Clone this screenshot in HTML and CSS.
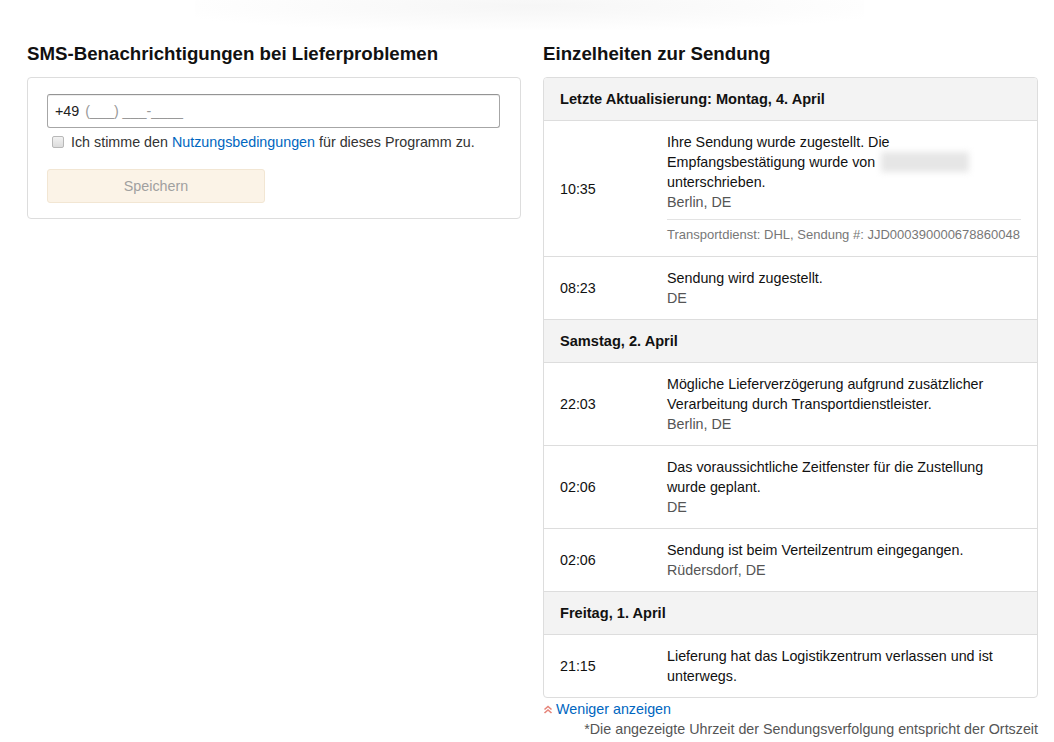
FILE: index.html
```html
<!DOCTYPE html>
<html lang="de">
<head>
<meta charset="utf-8">
<title>Sendungsverfolgung</title>
<link rel="stylesheet" href="styles.css">
</head>
<body>
<div class="topband"></div>
<div class="page">
  <section class="col col-left">
    <h3 class="title">SMS-Benachrichtigungen bei Lieferproblemen</h3>
    <div class="card sms-card">
      <div class="phone-input"><span class="prefix">+49</span><span class="mask">(___) ___-____</span></div>
      <label class="agree"><span class="checkbox"></span><span>Ich stimme den <a class="link" href="#">Nutzungsbedingungen</a> für dieses Programm zu.</span></label>
      <button class="save" disabled>Speichern</button>
    </div>
  </section>
  <section class="col col-right">
    <h3 class="title">Einzelheiten zur Sendung</h3>
    <div class="card events">
      <div class="day">Letzte Aktualisierung: Montag, 4. April</div>
      <div class="event">
        <div class="time">10:35</div>
        <div class="desc">
          <div>Ihre Sendung wurde zugestellt. Die Empfangsbestätigung wurde von <span class="blur"></span> unterschrieben.</div>
          <div class="loc">Berlin, DE</div>
          <div class="carrier">Transportdienst: DHL, Sendung #: JJD000390000678860048</div>
        </div>
      </div>
      <div class="event">
        <div class="time">08:23</div>
        <div class="desc"><div>Sendung wird zugestellt.</div><div class="loc">DE</div></div>
      </div>
      <div class="day">Samstag, 2. April</div>
      <div class="event">
        <div class="time">22:03</div>
        <div class="desc"><div>Mögliche Lieferverzögerung aufgrund zusätzlicher Verarbeitung durch Transportdienstleister.</div><div class="loc">Berlin, DE</div></div>
      </div>
      <div class="event">
        <div class="time">02:06</div>
        <div class="desc"><div>Das voraussichtliche Zeitfenster für die Zustellung wurde geplant.</div><div class="loc">DE</div></div>
      </div>
      <div class="event">
        <div class="time">02:06</div>
        <div class="desc"><div>Sendung ist beim Verteilzentrum eingegangen.</div><div class="loc">Rüdersdorf, DE</div></div>
      </div>
      <div class="day">Freitag, 1. April</div>
      <div class="event">
        <div class="time">21:15</div>
        <div class="desc"><div>Lieferung hat das Logistikzentrum verlassen und ist unterwegs.</div></div>
      </div>
    </div>
    <a class="link less" href="#"><svg class="chev" width="10" height="9" viewBox="0 0 10 9"><path d="M1.5 4.5 L5 1.5 L8.5 4.5 M1.5 8 L5 5 L8.5 8" fill="none" stroke="#e6857a" stroke-width="1.6"/></svg>Weniger anzeigen</a>
    <p class="note">*Die angezeigte Uhrzeit der Sendungsverfolgung entspricht der Ortszeit</p>
  </section>
</div>
</body>
</html>
```

FILE: styles.css
```css
* { box-sizing: border-box; }
html, body { margin: 0; padding: 0; background: #fff; }
body {
  font-family: "Liberation Sans", Arial, sans-serif;
  font-size: 14.3px;
  line-height: 20px;
  color: #111;
}
.topband {
  height: 30px;
  margin: 0 190px 0 195px;
  background: radial-gradient(ellipse at 50% 20%, #f6f6f6 0%, #fbfbfb 45%, #ffffff 80%);
}
.page {
  display: flex;
  gap: 22px;
  padding-left: 27px;
  padding-right: 16px;
}
.col-left { width: 494px; }
.col-right { width: 495px; }
.title {
  margin: 12px 0 11px;
  font-size: 18.7px;
  line-height: 24px;
  font-weight: bold;
  color: #111;
}
.card {
  border: 1px solid #ddd;
  border-radius: 4px;
  background: #fff;
}
.sms-card {
  padding: 16px 20px 15px 19px;
}
.phone-input {
  height: 34px;
  border: 1px solid #a6a6a6;
  border-top-color: #949494;
  border-radius: 3px;
  padding: 6px 7px;
  display: flex;
  gap: 6px;
  color: #222;
  box-shadow: 0 1px 0 rgba(0,0,0,.07) inset;
}
.mask { color: #999; }
.agree {
  display: flex;
  align-items: center;
  gap: 7px;
  margin: 4px 0 0 5px;
  color: #333;
}
.checkbox {
  width: 12px;
  height: 12px;
  border: 1px solid #b8b8b8;
  border-radius: 2px;
  background: linear-gradient(#f2f2f2, #dcdcdc);
}
.link { color: #0066c0; text-decoration: none; }
.save {
  display: block;
  margin-top: 17px;
  width: 218px;
  height: 34px;
  border: 1px solid #f2e6d3;
  border-radius: 3px;
  background: #fbf3e7;
  color: #a0a0a0;
  font-family: inherit;
  font-size: 14.3px;
}
.events { overflow: hidden; }
.day {
  background: #f3f3f3;
  padding: 11px 16px 11px 16px;
  font-weight: bold;
  font-size: 14.6px;
  border-top: 1px solid #ddd;
  color: #111;
}
.day:first-child { border-top: 0; height: 42px; }
.event {
  display: flex;
  align-items: center;
  border-top: 1px solid #ddd;
  padding: 11px 16px 11px 16px;
  color: #111;
}
.time { width: 107px; flex: none; color: #111; }
.desc { flex: 1; }
.loc { color: #555; }
.carrier {
  margin-top: 7px;
  padding-top: 5px;
  border-top: 1px solid #e3e3e3;
  color: #777;
  font-size: 13px;
}
.blur {
  display: inline-block;
  width: 88px;
  height: 20px;
  margin-left: 2px;
  vertical-align: -5px;
  background: #e6e6e6;
  filter: blur(3px);
}
.less {
  display: inline-flex;
  align-items: center;
  gap: 3px;
  margin-top: 1px;
}
.chev { margin-top: 1px; }
.note {
  margin: 0;
  text-align: right;
  color: #555;
}
```
